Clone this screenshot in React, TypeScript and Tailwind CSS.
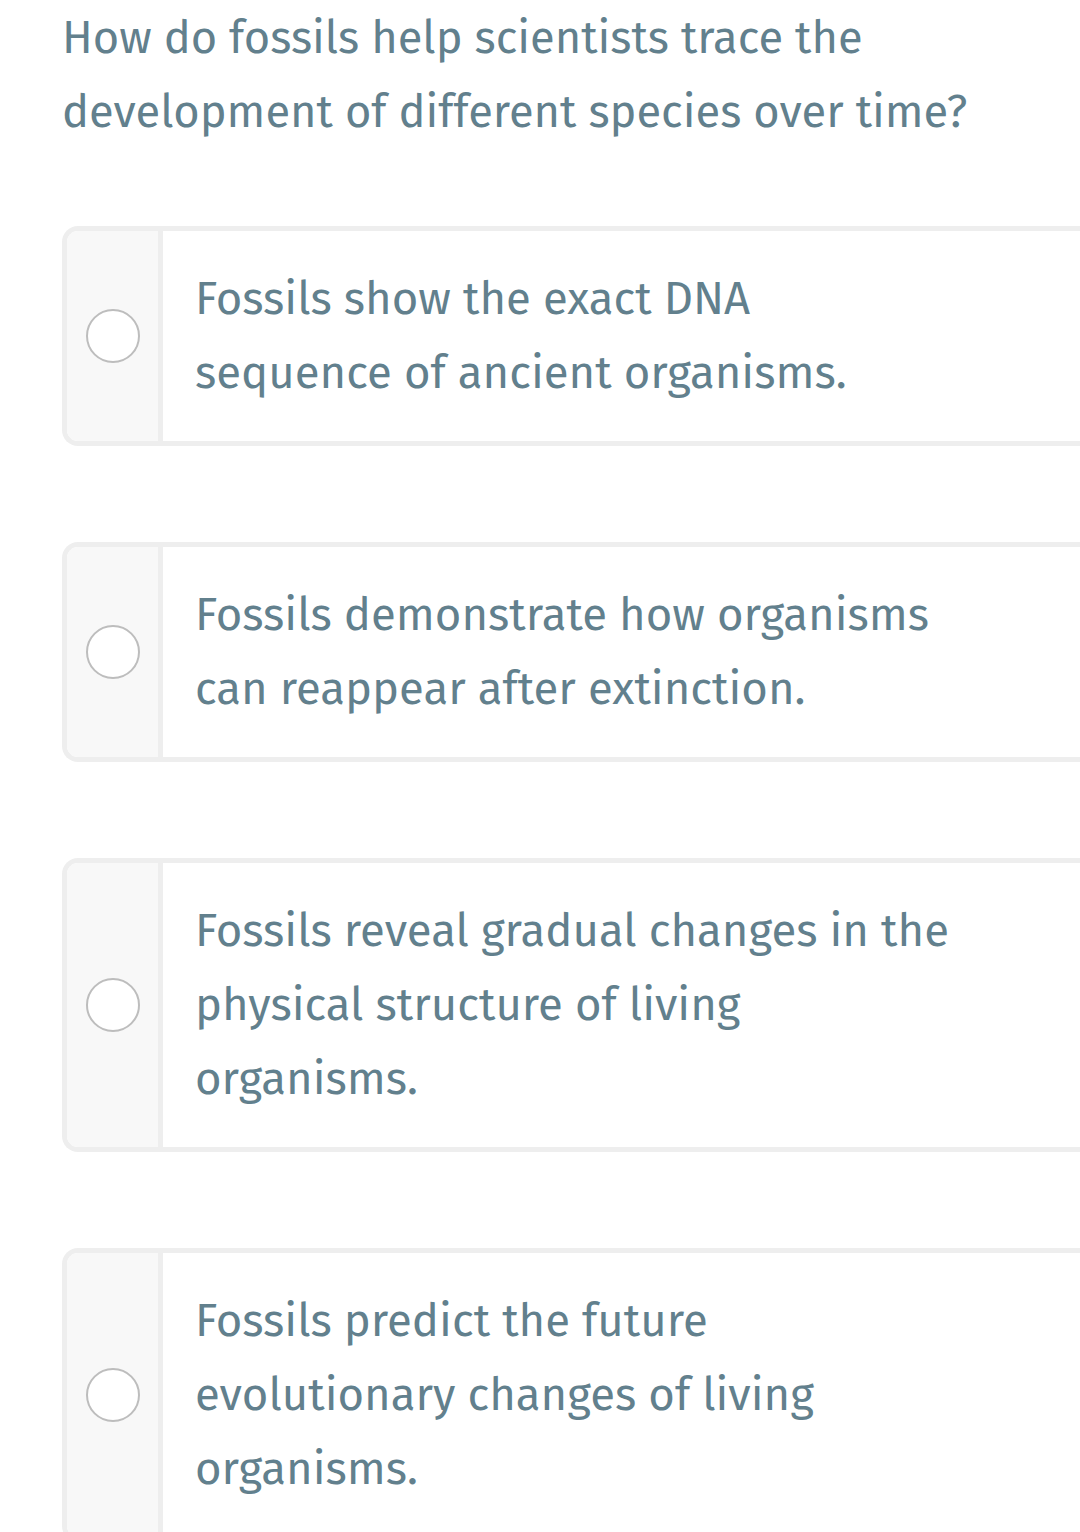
const options = [
  'Fossils show the exact DNA sequence of ancient organisms.',
  'Fossils demonstrate how organisms can reappear after extinction.',
  'Fossils reveal gradual changes in the physical structure of living organisms.',
  'Fossils predict the future evolutionary changes of living organisms.',
];

function Option({ text }: { text: string }) {
  return (
    <div className="flex w-[1040px] rounded-l-[16px] border-[5px] border-r-0 border-[#eeeeee] bg-white">
      <div className="flex w-[96px] shrink-0 items-center justify-center rounded-l-[11px] border-r-[5px] border-[#eeeeee] bg-[#f8f8f8]">
        <span className="block h-[54px] w-[54px] rounded-full border-2 border-[#bdbdbd] bg-white" />
      </div>
      <div className="py-[31px] pl-[32px]">
        <p className="w-[757px] text-[45.5px] leading-[74px] text-[#62808d]">{text}</p>
      </div>
    </div>
  );
}

export default function App() {
  return (
    <div
      className="min-h-screen overflow-hidden bg-white pl-[62px]"
      style={{ fontFamily: '"Fira Sans", "Noto Sans", sans-serif' }}
    >
      <h1 className="w-[960px] pt-px text-[45.25px] font-normal leading-[74px] text-[#62808d]">
        How do fossils help scientists trace the development of different species over time?
      </h1>
      <div className="mt-[77px] flex flex-col gap-[96px]">
        {options.map((o) => (
          <Option key={o} text={o} />
        ))}
      </div>
    </div>
  );
}
